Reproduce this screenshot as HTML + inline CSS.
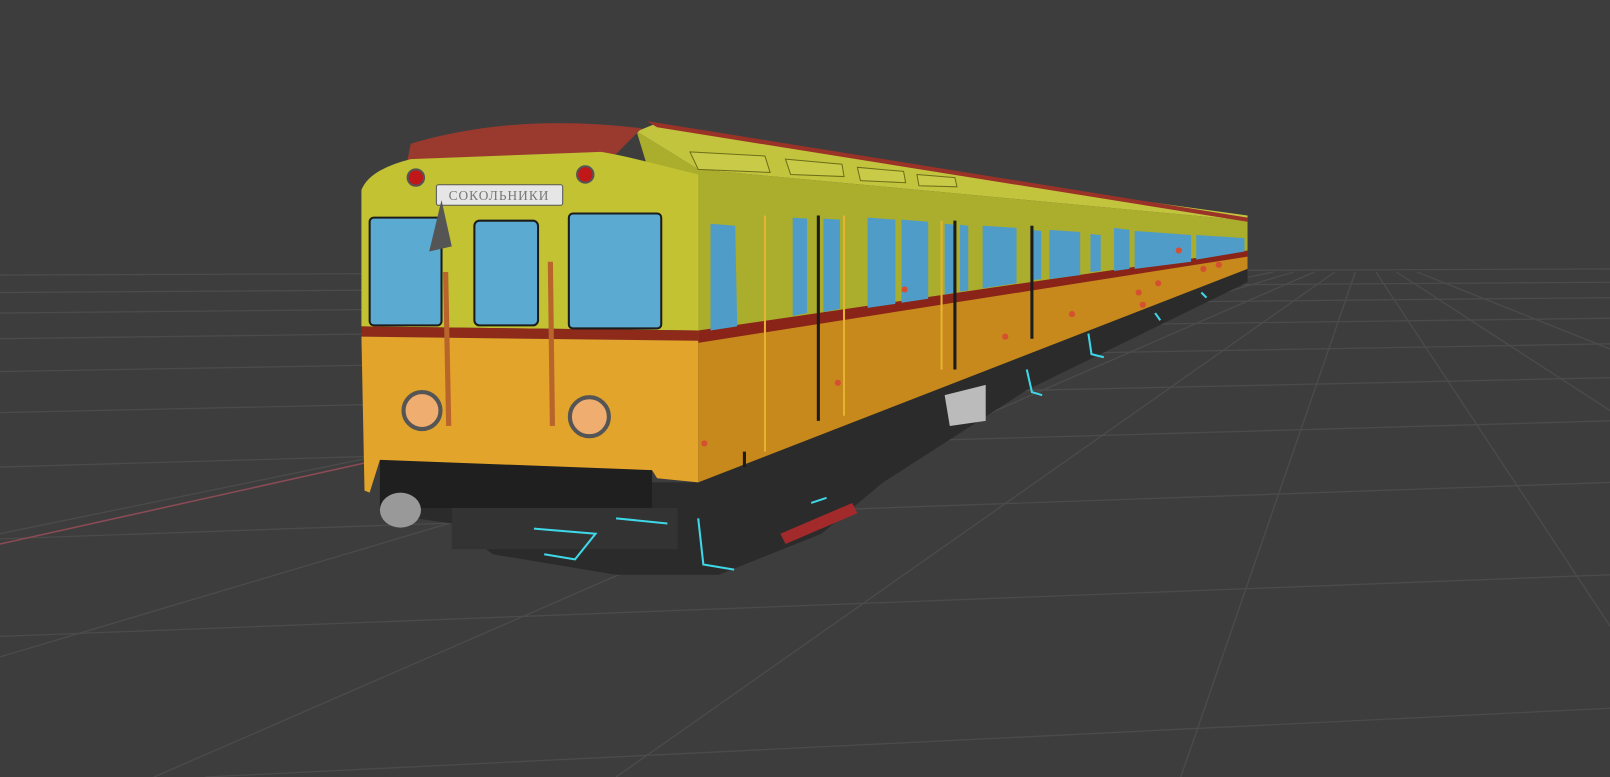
<!DOCTYPE html>
<html><head><style>html,body{margin:0;padding:0;background:#3d3d3d;overflow:hidden}svg{display:block}</style></head>
<body>
<svg width="1610" height="777" viewBox="0 0 1568 757" preserveAspectRatio="none" xmlns="http://www.w3.org/2000/svg">
<rect width="1568" height="757" fill="#3d3d3d"/>
<g stroke="#4b4b4b" stroke-width="1.3" fill="none">
<path d="M0 268 L1568 262"/><path d="M0 285 L1568 275"/><path d="M0 305 L1568 290"/><path d="M0 330 L1568 310"/><path d="M0 362 L1568 335"/><path d="M0 402 L1568 368"/><path d="M0 455 L1568 410"/><path d="M0 525 L1568 470"/><path d="M0 620 L1568 560"/><path d="M200 757 L1568 690"/>
<path d="M1300 265 L600 757"/><path d="M1320 265 L1150 757"/><path d="M1340 265 L1568 610"/><path d="M1280 265 L150 757"/><path d="M1260 265 L0 640"/><path d="M1240 265 L0 520"/><path d="M1360 265 L1568 400"/><path d="M1380 265 L1568 340"/>
</g>
<path d="M0 530 L360 450" stroke="#8a4b55" stroke-width="1.5"/>
<!-- undercarriage -->
<path d="M680 470 L1215 262 L1215 275 L1000 380 L860 470 L800 520 L700 560 L600 560 L480 540 L440 510 L370 500 L370 470 Z" fill="#2b2b2b"/>
<rect x="370" y="440" width="265" height="55" fill="#1f1f1f"/>
<rect x="440" y="495" width="220" height="40" fill="#333"/>
<ellipse cx="390" cy="497" rx="20" ry="17" fill="#999"/>
<path d="M760 520 L830 490 L835 500 L765 530 Z" fill="#a32a2a"/>
<path d="M920 385 L960 375 L960 410 L925 415 Z" fill="#bbb"/>
<g stroke="#3fd8e8" stroke-width="2" fill="none">
<path d="M520 515 L580 520 L560 545 L530 540"/><path d="M600 505 L650 510"/><path d="M680 505 L685 550 L715 555"/><path d="M790 490 L805 485"/><path d="M1000 360 L1005 382 L1015 385"/><path d="M1060 325 L1063 345 L1075 348"/><path d="M1125 305 L1130 312"/><path d="M1170 285 L1175 290"/>
</g>
<!-- side upper green -->
<path d="M620 128 L680 165 L1215 215 L1215 247 L680 325 Z" fill="#abad2c"/>
<path d="M620 128 L680 165 L1215 215 L1215 210 L1070 190 L640 120 Z" fill="#c2c43e"/>
<path d="M630 118 L1215 212 L1215 216 L640 124 Z" fill="#9a3228"/>
<!-- side roof vents -->
<g fill="#c8ca48" stroke="#6d6e1a" stroke-width="1">
<path d="M672 148 L745 152 L750 168 L680 165 Z"/><path d="M765 155 L820 160 L822 172 L770 170 Z"/><path d="M835 163 L880 167 L882 178 L838 176 Z"/><path d="M893 170 L930 173 L932 182 L895 181 Z"/>
</g>
<!-- side lower orange -->
<path d="M680 325 L1215 247 L1215 262 L680 470 Z" fill="#c7881c"/>
<path d="M680 322 L1215 244 L1215 250 L680 334 Z" fill="#8a2418"/>
<!-- side windows -->
<g fill="#4f9cc8">
<path d="M692 218 L716 220 L718 318 L692 322 Z"/><path d="M772 212 L786 213 L786 305 L772 308 Z"/><path d="M802 213 L818 214 L818 301 L802 304 Z"/><path d="M845 212 L872 214 L872 296 L845 300 Z"/><path d="M878 214 L904 216 L904 291 L878 295 Z"/><path d="M920 218 L930 219 L930 285 L920 287 Z"/><path d="M935 219 L943 220 L943 283 L935 284 Z"/><path d="M957 220 L990 222 L990 276 L957 281 Z"/><path d="M1005 224 L1014 225 L1014 272 L1005 273 Z"/><path d="M1022 224 L1052 226 L1052 268 L1022 272 Z"/><path d="M1062 228 L1072 229 L1072 264 L1062 265 Z"/><path d="M1085 222 L1100 224 L1100 262 L1085 264 Z"/><path d="M1105 225 L1160 229 L1160 255 L1105 262 Z"/><path d="M1165 229 L1212 232 L1212 245 L1165 253 Z"/>
</g>
<g stroke="#1c1c1c" stroke-width="3"><path d="M725 440 L725 455"/><path d="M797 210 L797 410"/><path d="M930 215 L930 360"/><path d="M1005 220 L1005 330"/></g>
<g stroke="#e6b232" stroke-width="2"><path d="M745 210 L745 440"/><path d="M822 210 L822 405"/><path d="M917 215 L917 360"/></g>
<!-- front -->
<path d="M400 140 Q500 110 625 125 L600 150 L395 165 Z" fill="#9a3a2e"/>
<path d="M352 185 Q360 165 400 155 L585 148 Q600 150 640 160 L680 170 L680 322 L352 318 Z" fill="#c2c232"/>
<path d="M352 318 L680 322 L680 332 L352 328 Z" fill="#8e2a1a"/>
<path d="M352 328 L680 332 L680 470 L640 466 L635 458 L370 448 L360 480 L355 478 Z" fill="#e2a42a"/>
<g fill="#5aaad2" stroke="#1c1c1c" stroke-width="2">
<rect x="360" y="212" width="70" height="105" rx="4"/><rect x="462" y="215" width="62" height="102" rx="5"/><rect x="554" y="208" width="90" height="112" rx="4"/>
</g>
<rect x="425" y="180" width="123" height="20" rx="2" fill="#e6e6e6" stroke="#555"/>
<text x="486" y="195" font-family="Liberation Serif, serif" font-size="13" fill="#777" text-anchor="middle" letter-spacing="1">СОКОЛЬНИКИ</text>
<circle cx="405" cy="173" r="8" fill="#c01818" stroke="#555" stroke-width="2"/>
<circle cx="570" cy="170" r="8" fill="#c01818" stroke="#555" stroke-width="2"/>
<g stroke="#b8642a" stroke-width="5"><path d="M434 265 L437 415"/><path d="M536 255 L538 415"/></g>
<path d="M430 195 L440 240 L418 245 Z" fill="#555"/>
<g fill="#f0ad70" stroke="#555" stroke-width="4"><circle cx="411" cy="400" r="18"/><circle cx="574" cy="406" r="19"/></g>
<g fill="#d45030"><circle cx="881" cy="282" r="3"/><circle cx="979" cy="328" r="3"/><circle cx="1044" cy="306" r="3"/><circle cx="816" cy="373" r="3"/><circle cx="686" cy="432" r="3"/><circle cx="1109" cy="285" r="3"/><circle cx="1128" cy="276" r="3"/><circle cx="1148" cy="244" r="3"/><circle cx="1172" cy="262" r="3"/><circle cx="1187" cy="258" r="3"/><circle cx="1113" cy="297" r="3"/></g>
</svg>
</body></html>
